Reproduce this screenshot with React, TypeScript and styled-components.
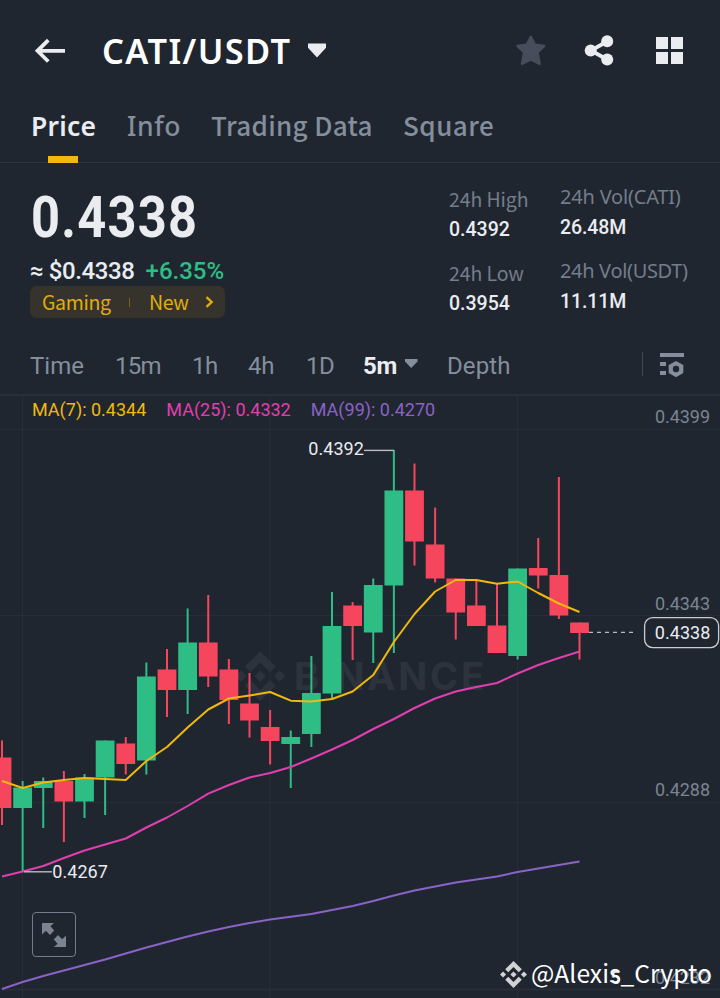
import React from 'react';
import styled, { createGlobalStyle } from 'styled-components';

const BG = '#202630';
const WHITE = '#eaecef';
const MUTED = '#848e9c';
const UP = '#2ebd85';
const DOWN = '#f6465d';
const YELLOW = '#f0b90b';
const PINK = '#e03fae';
const PURPLE = '#8a63c6';

const NOTO = '"Noto Sans", sans-serif';
const SOURCE = '"Noto Sans CJK SC", "Noto Sans", sans-serif';
const ROBOTO = 'Roboto, sans-serif';

const Global = createGlobalStyle`
  html, body { margin: 0; background: ${BG}; }
  body { overflow: hidden; }
  * { box-sizing: border-box; }
  svg { display: block; }
`;

const Screen = styled.main`
  width: 720px;
  height: 998px;
  display: flex;
  flex-direction: column;
  background: ${BG};
  color: ${WHITE};
  font-family: ${ROBOTO};
  white-space: nowrap;
  overflow: hidden;
`;

const Header = styled.header`
  height: 101px;
  display: grid;
  grid-template-columns: 68px 206px 207px 69px 72px auto;
  align-items: center;
  padding-left: 34px;
`;

const Title = styled.h1`
  margin: 0;
  font: 600 34.4px/44px ${NOTO};
  letter-spacing: 1.4px;
  color: #fff;
`;

const Tabs = styled.nav`
  height: 62px;
  display: grid;
  grid-template-columns: 96px 84px 192px auto;
  padding-left: 31px;
  border-bottom: 1px solid #2d343e;
`;

const Tab = styled.span<{ $active?: boolean; $source?: boolean; $spacing?: number }>`
  position: relative;
  height: 62px;
  padding-top: ${p => (p.$source ? 3 : 4)}px;
  font: ${p => (p.$active ? 600 : 500)} ${p => (p.$source ? 26 : 26.5)}px/42px ${p => (p.$source ? SOURCE : NOTO)};
  letter-spacing: ${p => p.$spacing ?? 0}px;
  color: ${p => (p.$active ? WHITE : MUTED)};
  &::after {
    content: '';
    display: ${p => (p.$active ? 'block' : 'none')};
    position: absolute;
    left: 17px;
    bottom: 0;
    width: 30px;
    height: 7px;
    background: ${YELLOW};
  }
`;

const Summary = styled.section`
  height: 167px;
  display: grid;
  grid-template-columns: 419px 111px auto;
  padding-left: 30px;
`;

const PriceColumn = styled.div`
  display: flex;
  flex-direction: column;
  align-items: flex-start;
`;

const Price = styled.div`
  margin: 20px 0 0 1px;
  height: 69px;
  font: 700 57.5px/70px ${ROBOTO};
  letter-spacing: 1.4px;
  transform: scaleX(0.88);
  transform-origin: 0 50%;
`;

const Converted = styled.div`
  display: flex;
  gap: 11px;
  height: 34px;
  font: 500 24px/38px ${ROBOTO};
  letter-spacing: -0.4px;
`;

const Change = styled.span`
  color: ${UP};
  letter-spacing: 0;
`;

const TagBar = styled.div`
  width: 195px;
  height: 32px;
  display: grid;
  grid-template-columns: 87px 20px 56px auto;
  align-items: center;
  padding-left: 12px;
  border-radius: 7px;
  background: #35332c;
  color: #e0ad0d;
  font: 400 19.5px/30px ${SOURCE};
`;

const Tag = styled.span`
  margin-top: -1px;
  letter-spacing: -0.35px;
`;

const TagDivider = styled.i`
  width: 1px;
  height: 9px;
  background: #7a621d;
`;

const StatColumn = styled.div<{ $top: number }>`
  display: flex;
  flex-direction: column;
  gap: 20px;
  padding-top: ${p => p.$top}px;
`;

const Stat = styled.div`
  height: 54px;
`;

const StatLabel = styled.div<{ $spacing: number; $source?: boolean }>`
  height: 26px;
  font: 400 ${p => (p.$source ? 19.5 : 20)}px/${p => (p.$source ? 25 : 26)}px ${p => (p.$source ? SOURCE : NOTO)};
  letter-spacing: ${p => p.$spacing}px;
  color: #747d8b;
`;

const StatValue = styled.div<{ $spacing?: number }>`
  height: 28px;
  font: 500 19.5px/35px ${ROBOTO};
  letter-spacing: ${p => p.$spacing ?? 0}px;
`;

const Intervals = styled.nav`
  height: 66px;
  display: grid;
  grid-template-columns: 85px 77px 56px 58px 57px 84px 195px 16px auto;
  padding: 0 0 0 30px;
  border-bottom: 2px solid #292f39;
`;

const Interval = styled.span<{ $active?: boolean; $spacing?: number }>`
  display: flex;
  align-items: center;
  gap: 8px;
  height: 72px;
  font: ${p => (p.$active ? 700 : 400)} 24px/30px ${ROBOTO};
  letter-spacing: ${p => p.$spacing ?? 0}px;
  color: ${p => (p.$active ? WHITE : MUTED)};
`;

const Separator = styled.i`
  width: 1px;
  height: 24px;
  margin-top: 22px;
  background: #414853;
`;

const SettingsSlot = styled.span`
  padding-top: 23px;
`;

const Chart = styled.section`
  position: relative;
  height: 602px;
`;

const Legend = styled.div`
  position: absolute;
  left: 32px;
  top: 4px;
  display: flex;
  gap: 20px;
  font: 400 18px/20px ${ROBOTO};
`;

const LegendItem = styled.span<{ $color: string }>`
  color: ${p => p.$color};
`;

const ExpandButton = styled.button`
  position: absolute;
  left: 32px;
  top: 516px;
  width: 44px;
  height: 45px;
  padding: 0;
  display: grid;
  place-items: center;
  border: 1px solid #727b89;
  border-radius: 4px;
  background: none;
`;

const Signature = styled.div`
  position: absolute;
  left: 500px;
  top: 558px;
  display: flex;
  align-items: center;
  gap: 4px;
  height: 40px;
  font: 400 24.7px/36px ${SOURCE};
  color: #fff;
`;

const SignatureName = styled.span`
  margin-top: -5px;
`;

const LOGO =
  'M38.73 53.2l24.59-24.58 24.6 24.6 14.3-14.31L63.32 0 24.41 38.91zM0 63.31L14.3 49l14.31 14.31L14.3 77.61zM38.73 73.41l24.59 24.59 24.6-24.6 14.31 14.29L63.32 126.6 24.41 87.71zM98 63.31L112.3 49l14.31 14.31L112.3 77.62zM77.83 63.3L63.32 48.78 48.81 63.28l14.51 14.5z';

const START = 2;
const STEP = 20.625;
const cx = (i: number) => START + STEP * i;

// [high, body top, body bottom, low, rising]
const candles: [number, number, number, number, boolean][] = [
  [740.5, 757.5, 808, 825, false],
  [781, 787.5, 808, 871, true],
  [777.5, 781, 788, 828, true],
  [771, 781, 801.5, 842, false],
  [774, 777.5, 801.5, 818, true],
  [740.5, 740.5, 777.5, 815, true],
  [737, 743.5, 764, 774.5, false],
  [662.5, 676.5, 760.5, 774.5, true],
  [649, 669.5, 690, 717, false],
  [608.5, 642.5, 690, 714, true],
  [595, 642.5, 676.5, 687, false],
  [659, 669.5, 700, 724, false],
  [673, 703.5, 720.5, 737.5, false],
  [710, 727, 741, 764.5, false],
  [730.5, 737, 744, 788, true],
  [656, 693, 734, 747, true],
  [592, 626, 693.5, 699, true],
  [602, 605.5, 626, 660, false],
  [578.5, 585, 632.5, 663, true],
  [450, 490.5, 585.5, 653, true],
  [463.5, 490.5, 541.5, 565.5, false],
  [507.5, 544.5, 578.5, 582.5, false],
  [578.5, 578.5, 612.5, 639.5, false],
  [581, 605.5, 626, 626, false],
  [584, 625.5, 653, 653, false],
  [568.5, 568.5, 656, 659.5, true],
  [538, 568, 575.5, 588.5, false],
  [477, 575, 615.5, 619, false],
  [622.5, 622.5, 633, 659.5, false],
];

const ma7 = [781, 788, 782.5, 780, 778, 779, 780, 761, 747, 727.5, 709.5, 698.5, 695.5, 692, 700.7, 701.5, 699, 691.5, 675, 642, 614, 591.5, 580, 580, 583.8, 581.5, 593, 603.5, 612];
const ma25 = [876.5, 871.5, 866, 858, 850.5, 844.5, 838.5, 827.5, 817.5, 806, 793.7, 785, 777.5, 773, 767, 758.5, 749.5, 740, 729, 719, 708, 698.5, 691.5, 687, 683, 673.5, 665, 658, 651.5];
const ma99 = [989, 982, 976, 970.5, 965, 959.5, 953.5, 947.5, 942, 936.5, 931.5, 927, 923, 919.5, 916.8, 914, 910, 906, 901, 895.5, 890.5, 886.5, 882.5, 879.5, 876.5, 872, 868.5, 865, 861.5];

const line = (ys: number[]) => ys.map((y, i) => `${cx(i)},${y}`).join(' ');

const axis = [
  { label: '0.4399', y: 423 },
  { label: '0.4343', y: 609.7 },
  { label: '0.4288', y: 796 },
  { label: '0.4232', y: 983.5 },
];

function CandleChart() {
  return (
    <svg width="720" height="602" viewBox="0 396 720 602" fontFamily={ROBOTO} fontSize="18">
      <g stroke="#282e38" strokeWidth="1">
        {[22.5, 270, 517.5].map(x => <line key={x} x1={x} x2={x} y1="396" y2="998" />)}
        {[429.5, 615.5, 802.5].map(y => <line key={y} x1="0" x2="720" y1={y} y2={y} />)}
        <line x1="0" x2="720" y1="989.5" y2="989.5" strokeWidth="2" />
      </g>
      <g fill="#2d333d">
        <path d={LOGO} transform="translate(235.2 651.2) scale(.395)" />
        <text x="294" y="690" fontFamily="Inter" fontWeight="700" fontSize="38" textLength="190">BINANCE</text>
      </g>
      <g fill="#7b8491">
        {axis.map(a => <text key={a.label} x="655" y={a.y} textLength="55">{a.label}</text>)}
      </g>
      {candles.map(([high, top, bottom, low, rising], i) => (
        <g key={i} fill={rising ? UP : DOWN}>
          <rect x={cx(i) - 1} y={high} width="2" height={low - high} />
          <rect x={cx(i) - 9.4} y={top} width="18.8" height={bottom - top} />
        </g>
      ))}
      <g fill="none" strokeWidth="2" strokeLinejoin="round">
        <polyline points={line(ma99)} stroke={PURPLE} />
        <polyline points={line(ma25)} stroke={PINK} />
        <polyline points={line(ma7)} stroke={YELLOW} />
      </g>
      <g stroke="#b7bcc4" strokeWidth="1.4">
        <line x1="364" x2="394" y1="450.4" y2="450.4" />
        <line x1="24" x2="52" y1="871.8" y2="871.8" />
        <line x1="589" x2="633" y1="632.4" y2="632.4" strokeDasharray="4 4" />
      </g>
      <g fill={WHITE}>
        <text x="308.3" y="455.4" textLength="55.5">0.4392</text>
        <text x="52.3" y="877.5" textLength="55.5">0.4267</text>
        <text x="610.5" y="983.5" fontWeight="500">5</text>
      </g>
      <rect x="644.6" y="617.6" width="74" height="30" rx="8" fill={BG} stroke="#c9cdd3" strokeWidth="1.3" />
      <text x="654.8" y="639.3" fill={WHITE} textLength="55.5">0.4338</text>
    </svg>
  );
}

export default function App() {
  return (
    <Screen>
      <Global />
      <Header>
        <svg width="32" height="26" viewBox="34 37.5 32 26" fill="none" stroke={WHITE} strokeWidth="3.8">
          <path d="M65 50.3H37.5M48.3 39.6L37.5 50.3L48.3 61" />
        </svg>
        <Title>CATI/USDT</Title>
        <svg width="20" height="16" viewBox="0 0 20 16">
          <path d="M0 .5h18v4.2L9 14.5L0 4.7z" fill={WHITE} />
        </svg>
        <svg width="34" height="32" viewBox="-1 0 34 32">
          <path
            d="M14 2.2L18.1 10.3L27.4 11.4L20.7 17.8L22.9 29.3L14 25L5.1 29.3L7.3 17.8L.6 11.4L9.9 10.3z"
            fill="#474d5a" stroke="#474d5a" strokeWidth="2.4" strokeLinejoin="round" transform="translate(.8 -.5)"
          />
        </svg>
        <svg width="32" height="32" viewBox="1 .5 32 32" fill={WHITE}>
          <path d="M24 7L8 16L24 25" fill="none" stroke={WHITE} strokeWidth="3.8" />
          <circle cx="24.2" cy="6.8" r="6" />
          <circle cx="7.7" cy="16" r="6" />
          <circle cx="24.2" cy="25" r="6" />
        </svg>
        <svg width="28" height="28" viewBox="0 0 28 28" fill={WHITE}>
          <path d="M0 0h12v12H0zM15 0h12v12H15zM0 15h12v12H0zM15 15h12v12H15z" />
        </svg>
      </Header>
      <Tabs>
        <Tab $active $spacing={0.2}>Price</Tab>
        <Tab $spacing={0.6}>Info</Tab>
        <Tab $source $spacing={0.35}>Trading Data</Tab>
        <Tab $source $spacing={0.5}>Square</Tab>
      </Tabs>
      <Summary>
        <PriceColumn>
          <Price>0.4338</Price>
          <Converted>
            <span>≈ $0.4338</span>
            <Change>+6.35%</Change>
          </Converted>
          <TagBar>
            <Tag>Gaming</Tag>
            <TagDivider />
            <Tag>New</Tag>
            <svg width="10" height="12" viewBox="0 0 10 12" fill="none" stroke="#e0ad0d" strokeWidth="2.4">
              <path d="M1.5 1.2L6.6 6L1.5 10.8" />
            </svg>
          </TagBar>
        </PriceColumn>
        <StatColumn $top={23}>
          <Stat>
            <StatLabel $source $spacing={-0.1}>24h High</StatLabel>
            <StatValue>0.4392</StatValue>
          </Stat>
          <Stat>
            <StatLabel $source $spacing={-0.1}>24h Low</StatLabel>
            <StatValue>0.3954</StatValue>
          </Stat>
        </StatColumn>
        <StatColumn $top={21}>
          <Stat>
            <StatLabel $spacing={-0.2}>24h Vol(CATI)</StatLabel>
            <StatValue $spacing={-0.1}>26.48M</StatValue>
          </Stat>
          <Stat>
            <StatLabel $spacing={-0.33}>24h Vol(USDT)</StatLabel>
            <StatValue $spacing={-0.1}>11.11M</StatValue>
          </Stat>
        </StatColumn>
      </Summary>
      <Intervals>
        <Interval>Time</Interval>
        <Interval $spacing={-0.7}>15m</Interval>
        <Interval $spacing={-0.5}>1h</Interval>
        <Interval $spacing={-0.3}>4h</Interval>
        <Interval $spacing={-0.5}>1D</Interval>
        <Interval $active $spacing={-0.3}>
          5m
          <svg width="13" height="14" viewBox="0 0 13 14"><path d="M0 0h12.5v2.5L6.2 9L0 2.5z" fill={MUTED} /></svg>
        </Interval>
        <Interval $spacing={0.1}>Depth</Interval>
        <Separator />
        <SettingsSlot>
          <svg width="26" height="26" viewBox="0 0 26 26" fill={MUTED}>
            <path d="M2 0h24v4H2zM2 9h6v4H2zM2 18h6v4H2z" />
            <path fillRule="evenodd" d="M18 8l7.3 4v8L18 24.3L10.7 20v-8zM18 12.8a3.2 3.2 0 1 0 0 6.4a3.2 3.2 0 1 0 0-6.4z" />
          </svg>
        </SettingsSlot>
      </Intervals>
      <Chart>
        <CandleChart />
        <Legend>
          <LegendItem $color={YELLOW}>MA(7): 0.4344</LegendItem>
          <LegendItem $color={PINK}>MA(25): 0.4332</LegendItem>
          <LegendItem $color={PURPLE}>MA(99): 0.4270</LegendItem>
        </Legend>
        <ExpandButton aria-label="Expand chart">
          <svg width="24" height="24" viewBox="0 0 24 24" fill="#7b8491">
            <path d="M0 0h12L8.4 3.2L12.2 7.6L8 12L3.8 7.8L0 11.4zM24 24H12l3.6-3.2L11.8 16.4L16 12L20.2 16.2L24 12.6z" />
          </svg>
        </ExpandButton>
        <Signature>
          <svg width="27" height="27" viewBox="0 0 126.61 126.6"><path d={LOGO} fill="#d2d3d5" /></svg>
          <SignatureName>@Alexis_Crypto</SignatureName>
        </Signature>
      </Chart>
    </Screen>
  );
}
